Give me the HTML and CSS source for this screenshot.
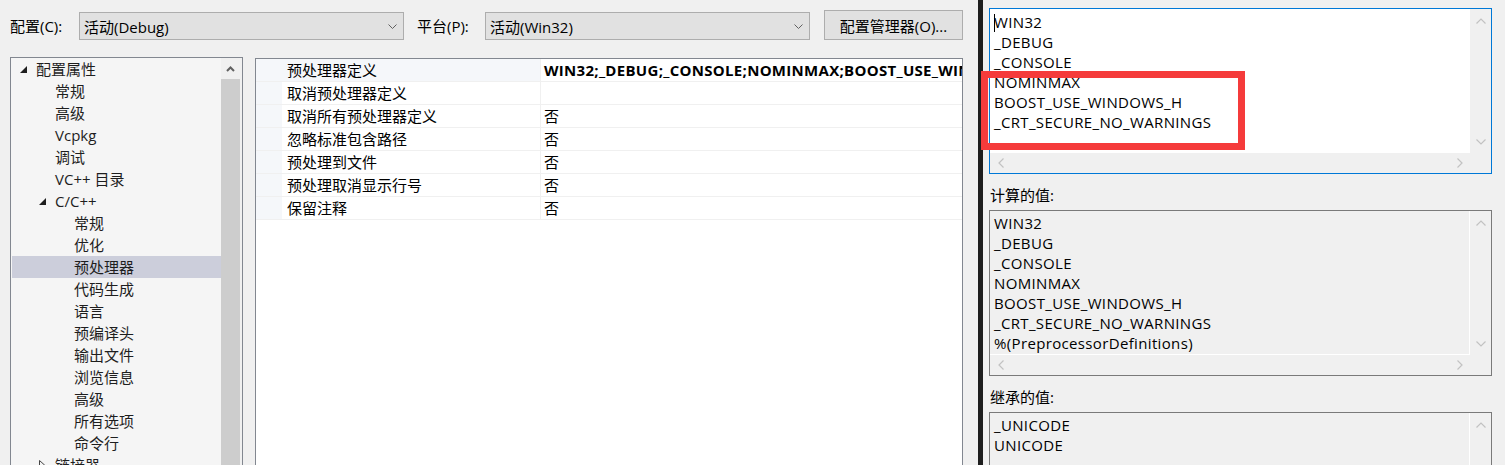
FILE: index.html
```html
<!DOCTYPE html>
<html lang="zh-CN">

<head>
  <meta charset="UTF-8">
  <title>预处理器定义</title>
  <link rel="stylesheet" href="styles.css">
</head>

<body>
  <div class="window">
    <div class="dialog">
      <div class="toolbar">
        <label class="tb-label">配置(C):</label>
        <div class="combo">
          <span>活动(Debug)</span>
          <svg width="9" height="5" viewBox="0 0 9 5"><path d="M0.5 0.5 L4.5 4.5 L8.5 0.5" fill="none" stroke="#606060"/></svg>
        </div>
        <label class="tb-label platform">平台(P):</label>
        <div class="combo">
          <span>活动(Win32)</span>
          <svg width="9" height="5" viewBox="0 0 9 5"><path d="M0.5 0.5 L4.5 4.5 L8.5 0.5" fill="none" stroke="#606060"/></svg>
        </div>
        <button class="btn">配置管理器(O)...</button>
      </div>

      <div class="panes">
        <div class="tree">
          <div class="tree-list">
            <div class="node l0"><span class="twisty"><svg width="7" height="7" viewBox="0 0 7 7"><path d="M7 0 V7 H0 Z" fill="#1e1e1e"/></svg></span>配置属性</div>
            <div class="node l1"><span class="twisty"></span>常规</div>
            <div class="node l1"><span class="twisty"></span>高级</div>
            <div class="node l1"><span class="twisty"></span>Vcpkg</div>
            <div class="node l1"><span class="twisty"></span>调试</div>
            <div class="node l1"><span class="twisty"></span>VC++ 目录</div>
            <div class="node l1"><span class="twisty"><svg width="7" height="7" viewBox="0 0 7 7"><path d="M7 0 V7 H0 Z" fill="#1e1e1e"/></svg></span>C/C++</div>
            <div class="node l2"><span class="twisty"></span>常规</div>
            <div class="node l2"><span class="twisty"></span>优化</div>
            <div class="node l2 selected"><span class="twisty"></span>预处理器</div>
            <div class="node l2"><span class="twisty"></span>代码生成</div>
            <div class="node l2"><span class="twisty"></span>语言</div>
            <div class="node l2"><span class="twisty"></span>预编译头</div>
            <div class="node l2"><span class="twisty"></span>输出文件</div>
            <div class="node l2"><span class="twisty"></span>浏览信息</div>
            <div class="node l2"><span class="twisty"></span>高级</div>
            <div class="node l2"><span class="twisty"></span>所有选项</div>
            <div class="node l2"><span class="twisty"></span>命令行</div>
            <div class="node l1"><span class="twisty"><svg width="6" height="10" viewBox="0 0 6 10"><path d="M0.5 0.5 L5.5 5 L0.5 9.5 Z" fill="none" stroke="#444"/></svg></span>链接器</div>
          </div>
          <div class="vscroll">
            <div class="scroll-up">
              <svg width="9" height="6" viewBox="0 0 9 6"><path d="M1 5 L4.5 1.5 L8 5" fill="none" stroke="#606060" stroke-width="2"/></svg>
            </div>
            <div class="thumb"></div>
          </div>
        </div>

        <div class="grid">
          <div class="prop current">
            <div class="margin"></div>
            <div class="name">预处理器定义</div>
            <div class="value">WIN32;_DEBUG;_CONSOLE;NOMINMAX;BOOST_USE_WINDOWS_H;_CRT_SECURE_NO_WARNINGS;%(PreprocessorDefinitions)</div>
          </div>
          <div class="prop">
            <div class="margin"></div>
            <div class="name">取消预处理器定义</div>
            <div class="value"></div>
          </div>
          <div class="prop">
            <div class="margin"></div>
            <div class="name">取消所有预处理器定义</div>
            <div class="value">否</div>
          </div>
          <div class="prop">
            <div class="margin"></div>
            <div class="name">忽略标准包含路径</div>
            <div class="value">否</div>
          </div>
          <div class="prop">
            <div class="margin"></div>
            <div class="name">预处理到文件</div>
            <div class="value">否</div>
          </div>
          <div class="prop">
            <div class="margin"></div>
            <div class="name">预处理取消显示行号</div>
            <div class="value">否</div>
          </div>
          <div class="prop">
            <div class="margin"></div>
            <div class="name">保留注释</div>
            <div class="value">否</div>
          </div>
        </div>
      </div>
    </div>

    <div class="splitter"></div>

    <div class="defs">
      <div class="editbox focused">
        <div class="text"><span class="caret"></span>WIN32
_DEBUG
_CONSOLE
NOMINMAX
BOOST_USE_WINDOWS_H
_CRT_SECURE_NO_WARNINGS</div>
        <div class="vbar">
          <span class="arrow"><svg width="10" height="6" viewBox="0 0 10 6"><path d="M0.5 5.5 L5 1 L9.5 5.5" fill="none" stroke="#c2c2c2" stroke-width="1.2"/></svg></span>
          <span class="arrow"><svg width="10" height="6" viewBox="0 0 10 6"><path d="M0.5 0.5 L5 5 L9.5 0.5" fill="none" stroke="#c2c2c2" stroke-width="1.2"/></svg></span>
        </div>
        <div class="hbar">
          <span class="arrow"><svg width="6" height="10" viewBox="0 0 6 10"><path d="M5.5 0.5 L1 5 L5.5 9.5" fill="none" stroke="#c2c2c2" stroke-width="1.2"/></svg></span>
          <span class="arrow"><svg width="6" height="10" viewBox="0 0 6 10"><path d="M0.5 0.5 L5 5 L0.5 9.5" fill="none" stroke="#c2c2c2" stroke-width="1.2"/></svg></span>
        </div>
        <div class="corner"></div>
      </div>

      <div class="field-label">计算的值:</div>
      <div class="editbox readonly">
        <div class="text">WIN32
_DEBUG
_CONSOLE
NOMINMAX
BOOST_USE_WINDOWS_H
_CRT_SECURE_NO_WARNINGS
%(PreprocessorDefinitions)</div>
        <div class="vbar">
          <span class="arrow"><svg width="10" height="6" viewBox="0 0 10 6"><path d="M0.5 5.5 L5 1 L9.5 5.5" fill="none" stroke="#c2c2c2" stroke-width="1.2"/></svg></span>
          <span class="arrow"><svg width="10" height="6" viewBox="0 0 10 6"><path d="M0.5 0.5 L5 5 L9.5 0.5" fill="none" stroke="#c2c2c2" stroke-width="1.2"/></svg></span>
        </div>
        <div class="hbar">
          <span class="arrow"><svg width="6" height="10" viewBox="0 0 6 10"><path d="M5.5 0.5 L1 5 L5.5 9.5" fill="none" stroke="#c2c2c2" stroke-width="1.2"/></svg></span>
          <span class="arrow"><svg width="6" height="10" viewBox="0 0 6 10"><path d="M0.5 0.5 L5 5 L0.5 9.5" fill="none" stroke="#c2c2c2" stroke-width="1.2"/></svg></span>
        </div>
        <div class="corner"></div>
      </div>

      <div class="field-label">继承的值:</div>
      <div class="editbox readonly">
        <div class="text">_UNICODE
UNICODE</div>
        <div class="vbar">
          <span class="arrow"><svg width="10" height="6" viewBox="0 0 10 6"><path d="M0.5 5.5 L5 1 L9.5 5.5" fill="none" stroke="#c2c2c2" stroke-width="1.2"/></svg></span>
          <span class="arrow"><svg width="10" height="6" viewBox="0 0 10 6"><path d="M0.5 0.5 L5 5 L9.5 0.5" fill="none" stroke="#c2c2c2" stroke-width="1.2"/></svg></span>
        </div>
        <div class="hbar">
          <span class="arrow"><svg width="6" height="10" viewBox="0 0 6 10"><path d="M5.5 0.5 L1 5 L5.5 9.5" fill="none" stroke="#c2c2c2" stroke-width="1.2"/></svg></span>
          <span class="arrow"><svg width="6" height="10" viewBox="0 0 6 10"><path d="M0.5 0.5 L5 5 L0.5 9.5" fill="none" stroke="#c2c2c2" stroke-width="1.2"/></svg></span>
        </div>
        <div class="corner"></div>
      </div>
    </div>

    <!-- red annotation box -->
    <div class="highlight"></div>
  </div>
</body>

</html>
```

FILE: styles.css
```css
body {
  margin: 0;
  background: #f0f0f0;
  font-family: "Open Sans", "Noto Sans CJK SC", sans-serif;
  font-size: 15px;
  color: #000;
  overflow: hidden;
}

.window {
  position: relative;
  display: flex;
  width: 1505px;
  height: 465px;
  overflow: hidden;
}

.dialog {
  width: 978px;
  flex: none;
}

.splitter {
  width: 5px;
  flex: none;
  background: #1e1e1e;
}

/* toolbar */

.toolbar {
  display: flex;
  align-items: flex-start;
  padding: 12px 0 0 10px;
  height: 28px;
}

.tb-label {
  width: 69px;
  line-height: 28px;
}

.tb-label.platform {
  width: 68px;
  margin-left: 13px;
}

.combo {
  width: 325px;
  height: 28px;
  box-sizing: border-box;
  border: 1px solid #adadad;
  background: #e1e1e1;
  display: flex;
  align-items: center;
  justify-content: space-between;
  padding: 0 6px 0 4px;
}

.btn {
  margin: -2px 0 0 14px;
  width: 139px;
  height: 30px;
  border: 1px solid #adadad;
  background: #e1e1e1;
  font: inherit;
  color: #000;
  padding: 0;
}

/* panes */

.panes {
  display: flex;
  align-items: flex-start;
  gap: 12px;
  padding-left: 10px;
  margin-top: 17px;
}

.tree {
  width: 233px;
  height: 430px;
  box-sizing: border-box;
  border: 1px solid #828790;
  background: #f5f5f5;
  display: flex;
}

.tree-list {
  flex: 1;
  padding-left: 1px;
}

.node {
  height: 22px;
  line-height: 21px;
  display: flex;
  align-items: center;
  white-space: nowrap;
  color: #1e1e1e;
}

.node.selected {
  background: #cccedb;
}

.twisty {
  width: 24px;
  flex: none;
  display: flex;
  align-items: center;
}

.twisty svg {
  margin-left: 8px;
}

.l1 {
  padding-left: 19px;
}

.l2 {
  padding-left: 38px;
}

.vscroll {
  width: 21px;
  flex: none;
  background: #f0f0f0;
}

.scroll-up {
  height: 21px;
  width: 19px;
  display: flex;
  align-items: center;
  justify-content: center;
}

.thumb {
  width: 19px;
  height: 400px;
  background: #cdcdcd;
}

.grid {
  width: 708px;
  height: 430px;
  margin-top: 1px;
  box-sizing: border-box;
  border: 1px solid #828790;
  background: #fff;
  overflow: hidden;
}

.prop {
  display: grid;
  grid-template-columns: 26px 258px 1fr;
  height: 23px;
  box-sizing: border-box;
  border-bottom: 1px solid #f0f0f0;
  line-height: 22px;
}

.prop .margin {
  background: #f5f7fa;
}

.prop .name {
  padding-left: 5px;
  white-space: nowrap;
}

.prop .value {
  border-left: 1px solid #f0f0f0;
  padding-left: 3px;
  white-space: nowrap;
  overflow: hidden;
  letter-spacing: 0.3px;
}

.prop.current .name {
  background: #f5f7fa;
}

.prop.current .value {
  font-weight: 700;
}

/* right side: definitions */

.defs {
  flex: 1;
  padding: 8px 0 0 6px;
}

.editbox {
  width: 503px;
  height: 166px;
  box-sizing: border-box;
  border: 1px solid #7a7a7a;
  display: grid;
  grid-template-columns: 1fr 21px;
  grid-template-rows: 1fr 20px;
  background: #f0f0f0;
}

.editbox.focused {
  border-color: #0078d7;
}

.editbox .text {
  padding: 3px 0 0 4px;
  line-height: 20px;
  letter-spacing: 0.35px;
  background: #fff;
  white-space: pre;
  overflow: hidden;
}

.editbox.readonly .text {
  padding-top: 2px;
  background: #f0f0f0;
  border-right: 1px solid #fff;
  border-bottom: 1px solid #fff;
}

.caret {
  display: inline-block;
  width: 1px;
  height: 18px;
  background: #000;
  vertical-align: -4px;
  margin-right: -1px;
}

.vbar {
  display: flex;
  flex-direction: column;
  justify-content: space-between;
}

.vbar .arrow {
  height: 23px;
  display: flex;
  align-items: center;
  justify-content: center;
}

.hbar {
  display: flex;
  justify-content: space-between;
}

.hbar .arrow {
  width: 21px;
  display: flex;
  align-items: center;
  justify-content: center;
}

.field-label {
  margin: 11px 0 5px;
  padding-left: 1px;
  line-height: 20px;
}

.highlight {
  position: absolute;
  left: 981px;
  top: 71px;
  width: 264px;
  height: 79px;
  box-sizing: border-box;
  border: 7px solid #f53b3b;
}
```
